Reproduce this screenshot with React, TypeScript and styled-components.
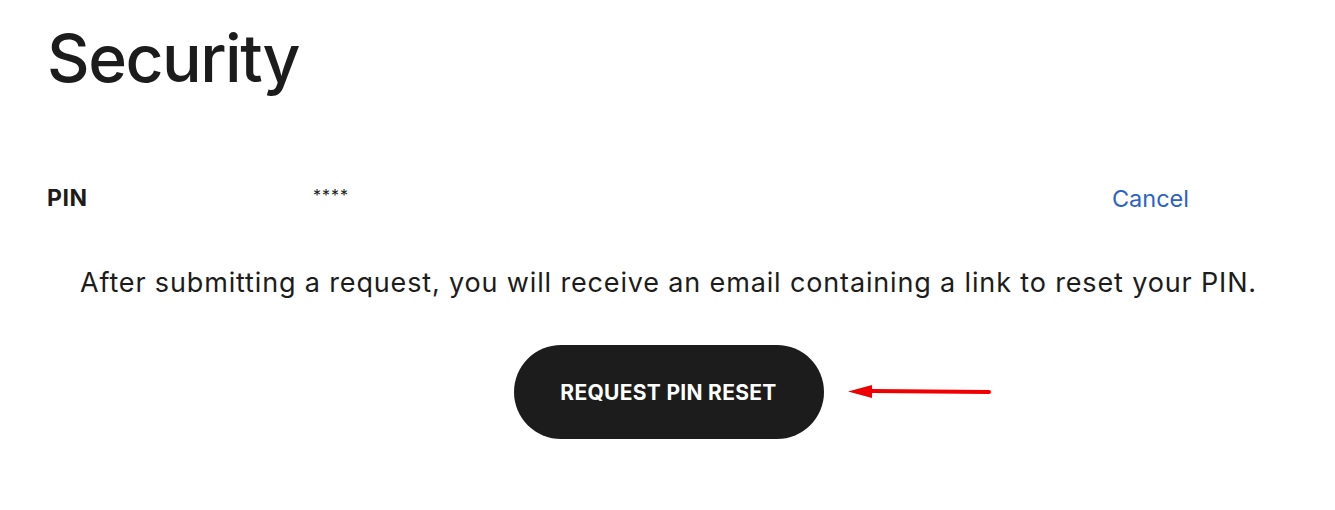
import styled, { createGlobalStyle } from "styled-components"

const GlobalStyle = createGlobalStyle`
    body {
        margin: 0;
        background: #ffffff;
        font-family: Inter, "Liberation Sans", sans-serif;
        color: #1b1c1b;
    }
`

function Arrow() {
    return (
        <ArrowWrap>
            <svg width="146" height="20" viewBox="0 0 146 20">
                <path d="M 24 9 L 141 10" stroke="#f00000" strokeWidth="4" strokeLinecap="round" fill="none" />
                <path d="M 0 9.5 L 24 3 L 24 16 Z" fill="#f00000" />
            </svg>
        </ArrowWrap>
    )
}

function App() {
    return (
        <Page>
            <GlobalStyle />
            <Title>Security</Title>
            <Row>
                <Label>PIN</Label>
                <Value>****</Value>
                <Action>Cancel</Action>
            </Row>
            <Notice>
                After submitting a request, you will receive an email containing a link to reset your PIN.
            </Notice>
            <ButtonRow>
                <ButtonHolder>
                    <Button>REQUEST PIN RESET</Button>
                    <Arrow />
                </ButtonHolder>
            </ButtonRow>
        </Page>
    )
}

export default App

const Page = styled.div`
    width: 1243px;
    padding: 18px 0 0 47px;
    box-sizing: content-box;
`

const Title = styled.h1`
    margin: 0;
    font-size: 66px;
    font-weight: 500;
    letter-spacing: -1.5px;
    line-height: 80px;
`

const Row = styled.div`
    display: flex;
    align-items: center;
    margin-top: 85px;
    height: 30px;
`

const Label = styled.div`
    width: 266px;
    font-size: 23px;
    font-weight: 700;
    letter-spacing: 0.6px;
`

const Value = styled.div`
    flex: 1;
    font-size: 16px;
    margin-top: -6px;
    letter-spacing: 1px;
`

const Action = styled.a`
    margin-right: 101px;
    font-size: 23.5px;
    color: #2a63c2;
    cursor: pointer;
`

const Notice = styled.p`
    margin: 53px 0 0;
    text-align: center;
    font-size: 27px;
    letter-spacing: 0.85px;
    line-height: 34px;
`

const ButtonRow = styled.div`
    display: flex;
    justify-content: center;
    margin-top: 45px;
`

const ButtonHolder = styled.div`
    position: relative;
`

const Button = styled.button`
    width: 310px;
    height: 94px;
    border: none;
    border-radius: 47px;
    background: #1b1c1b;
    color: #ffffff;
    font-family: Inter, "Liberation Sans", sans-serif;
    font-size: 21px;
    font-weight: 700;
    letter-spacing: 0.3px;
    cursor: pointer;
`

const ArrowWrap = styled.div`
    position: absolute;
    left: 334px;
    top: 37px;
    line-height: 0;
`
